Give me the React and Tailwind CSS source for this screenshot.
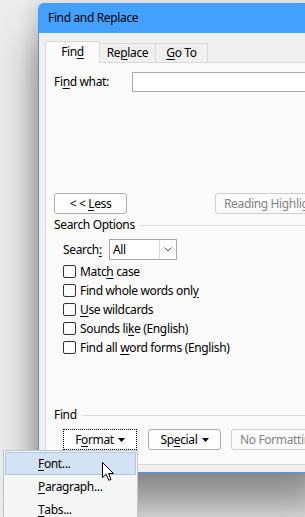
import React from "react";

const K = ({ children }) => (
  <span className="underline decoration-1 underline-offset-[2px]">{children}</span>
);

const Check = ({ children }) => (
  <div className="flex h-[19px] items-center gap-[4px]">
    <span className="h-[13px] w-[13px] shrink-0 rounded-[2px] border border-[#333333] bg-[#fdfdfd]" />
    <span className="whitespace-nowrap">{children}</span>
  </div>
);

const Caret = () => (
  <svg width="7" height="4" viewBox="0 0 7 4" className="ml-[4px]">
    <path d="M0 0h7L3.5 4z" fill="#000" />
  </svg>
);

export default function App() {
  return (
    <div className="relative h-[517px] w-[305px] overflow-hidden bg-[#ececec] font-['Noto_Sans',sans-serif] text-[12px] leading-[16px] tracking-[-0.35px] text-black">
      <div className="ml-[38px] mt-[3px] w-[290px] rounded-tl-[6px] border-b border-l border-[#3d9cfb] bg-[#f0f0f0] shadow-[0_34px_40px_rgba(0,0,0,0.42),-8px_0_14px_rgba(0,0,0,0.09)]">
        <div className="flex h-[30px] items-center rounded-tl-[5px] bg-[#42a1fe] pl-[9px]">Find and Replace</div>

        <div className="pb-[7px] pl-[6px] pt-[8px]">
          {/* tabs */}
          <div className="flex h-[21px] items-end">
            <div className="relative -mb-px flex h-[22px] w-[55px] items-center justify-center border-l border-r border-t border-[#d9d9d9] bg-[#fafafa] pb-[1px]">
              Fin<K>d</K>
            </div>
            <div className="flex h-[19px] w-[56px] items-center justify-center border-r border-t border-[#d9d9d9] bg-[#f0f0f0]">
              Re<K>p</K>lace
            </div>
            <div className="flex h-[19px] w-[52px] items-center justify-center border-r border-t border-[#d9d9d9] bg-[#f0f0f0]">
              <K>G</K>o To
            </div>
          </div>

          {/* panel */}
          <div className="border border-r-0 border-[#d9d9d9] bg-[#fafafa] pb-[14px] pl-[8px]">
            <div className="mt-[9px] flex h-[20px] items-center">
              <span className="w-[78px] shrink-0">
                Fi<K>n</K>d what:
              </span>
              <div className="h-[20px] flex-1 border border-r-0 border-[#ababab] bg-white" />
            </div>

            <div className="mt-[101px] flex h-[21px]">
              <button className="flex w-[73px] shrink-0 items-center justify-center rounded-[3px] border border-[#adadad] bg-[#fdfdfd]">
                &lt;&nbsp;&lt;&nbsp;<K>L</K>ess
              </button>
              <button className="ml-[88px] flex w-[150px] shrink-0 items-center overflow-hidden whitespace-nowrap rounded-[3px] border border-[#cfcfcf] bg-[#fbfbfb] pl-[8px] text-[#838383]">
                Reading Highlight
              </button>
            </div>

            <div className="mt-[3px] flex h-[16px] items-center">
              <span className="whitespace-nowrap">Search Options</span>
              <div className="ml-[5px] h-px flex-1 bg-[#dcdcdc]" />
            </div>

            <div className="pl-[9px]">
              <div className="mt-[6px] flex h-[21px] items-center">
                <span className="w-[46px] shrink-0">
                  Search<K>:</K>
                </span>
                <div className="flex h-[21px] w-[68px] shrink-0 items-center border border-[#a8a8a8] bg-white">
                  <span className="flex-1 pl-[3px]">All</span>
                  <span className="flex h-full w-[17px] items-center justify-center border-l border-[#d6d6d6]">
                    <svg width="8" height="5" viewBox="0 0 8 5">
                      <path d="M0.5 0.5L4 4L7.5 0.5" fill="none" stroke="#555" strokeWidth="1" />
                    </svg>
                  </span>
                </div>
              </div>

              <div className="mt-[2px]">
                <Check>
                  Matc<K>h</K> case
                </Check>
                <Check>
                  Find whole words onl<K>y</K>
                </Check>
                <Check>
                  <K>U</K>se wildcards
                </Check>
                <Check>
                  Sounds li<K>k</K>e (English)
                </Check>
                <Check>
                  Find all <K>w</K>ord forms (English)
                </Check>
              </div>
            </div>

            <div className="mt-[50px] flex h-[16px] items-center">
              <span>Find</span>
              <div className="ml-[5px] h-px flex-1 bg-[#dcdcdc]" />
            </div>

            <div className="mt-[6px] flex h-[21px] pl-[9px]">
              <button className="flex w-[74px] shrink-0 items-center justify-center border border-dotted border-black bg-[#fdfdfd]">
                F<K>o</K>rmat
                <Caret />
              </button>
              <button className="ml-[11px] flex w-[73px] shrink-0 items-center justify-center rounded-[3px] border border-[#adadad] bg-[#fdfdfd]">
                Sp<K>e</K>cial
                <Caret />
              </button>
              <button className="ml-[10px] flex w-[120px] shrink-0 items-center overflow-hidden whitespace-nowrap rounded-[3px] border border-[#cfcfcf] bg-[#fbfbfb] pl-[8px] text-[#838383]">
                No Formatting
              </button>
            </div>
          </div>
        </div>
      </div>

      {/* popup menu */}
      <div className="absolute left-[3px] top-[450px] h-[80px] w-[135px] border border-[#c4c4c4] bg-[#f5f5f5] p-px">
        <div className="flex h-[23px] items-center border border-[#a8c8ee] bg-[#d3e2f5] pl-[32px]">
          <K>F</K>ont...
        </div>
        <div className="flex h-[23px] items-center pl-[33px]">
          <K>P</K>aragraph...
        </div>
        <div className="flex h-[23px] items-center pl-[33px]">
          <K>T</K>abs...
        </div>
      </div>

      {/* mouse pointer */}
      <svg
        className="absolute left-[102px] top-[462px]"
        width="13"
        height="20"
        viewBox="0 0 13 20"
      >
        <path
          d="M0.5 0.5V15.5L4.2 12.2L6.8 18.3L9 17.4L6.5 11.5H11.5Z"
          fill="#fff"
          stroke="#000"
          strokeWidth="1"
          strokeLinejoin="round"
        />
      </svg>
    </div>
  );
}
